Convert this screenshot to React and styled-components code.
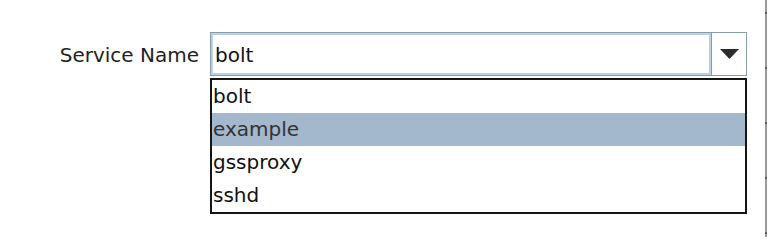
import React from "react";
import styled, { createGlobalStyle } from "styled-components";

const Global = createGlobalStyle`
  html, body { margin: 0; padding: 0; background: #ffffff; }
  body { width: 768px; height: 237px; overflow: hidden; font-family: "DejaVu Sans", sans-serif; }
`;

const Page = styled.div`
  position: relative;
  width: 768px;
  height: 237px;
  box-sizing: border-box;
  padding-top: 32px;
  background: #fff;
`;

const EdgeLine = styled.div`
  position: absolute;
  top: 0;
  right: 1px;
  width: 2px;
  height: 237px;
  background: repeating-linear-gradient(
    to bottom,
    #9a9a9a 0px,
    #9a9a9a 12px,
    #5e5e5e 12px,
    #5e5e5e 14px,
    #9a9a9a 14px,
    #9a9a9a 55px
  );
`;

const Row = styled.div`
  display: flex;
  align-items: flex-start;
`;

const Label = styled.div`
  width: 199px;
  box-sizing: border-box;
  text-align: right;
  height: 44px;
  padding-top: 2px;
  line-height: 42px;
  font-size: 20px;
  color: #222;
  margin-right: 11px;
`;

const ComboWrap = styled.div`
  display: flex;
  flex-direction: column;
  width: 537px;
`;

const Combo = styled.div`
  display: flex;
  height: 44px;
  box-sizing: border-box;
`;

const Field = styled.div`
  flex: 1;
  box-sizing: border-box;
  border: 1px solid #8a9bad;
  border-right: none;
  box-shadow: inset 0 0 0 2px #bcd0e4;
  padding-left: 4px;
  padding-top: 3px;
  line-height: 39px;
  font-size: 20px;
  color: #111;
  background: #fff;
`;

const ArrowButton = styled.div`
  width: 36px;
  box-sizing: border-box;
  border: 1px solid #8a9bad;
  box-shadow: inset 0 0 0 1px #ffffff;
  display: flex;
  align-items: center;
  justify-content: center;
  background: #fff;
`;

const List = styled.div`
  margin-top: 2px;
  border: 2px solid #151515;
  display: flex;
  flex-direction: column;
  background: #fff;
`;

const Item = styled.div`
  height: 33px;
  line-height: 33px;
  padding-left: 1px;
  font-size: 20px;
  color: ${(p) => (p.$selected ? "#333" : "#111")};
  background: ${(p) => (p.$selected ? "#a3b8cc" : "#fff")};
`;

const items = ["bolt", "example", "gssproxy", "sshd"];

export default function App() {
  return (
    <>
      <Global />
      <Page>
        <Row>
          <Label>Service Name</Label>
          <ComboWrap>
            <Combo>
              <Field>bolt</Field>
              <ArrowButton>
                <svg width="19" height="10" viewBox="0 0 19 10">
                  <polygon points="0,0 19,0 9.5,10" fill="#2b2b2b" />
                </svg>
              </ArrowButton>
            </Combo>
            <List>
              {items.map((it) => (
                <Item key={it} $selected={it === "example"}>
                  {it}
                </Item>
              ))}
            </List>
          </ComboWrap>
        </Row>
        <EdgeLine />
      </Page>
    </>
  );
}
